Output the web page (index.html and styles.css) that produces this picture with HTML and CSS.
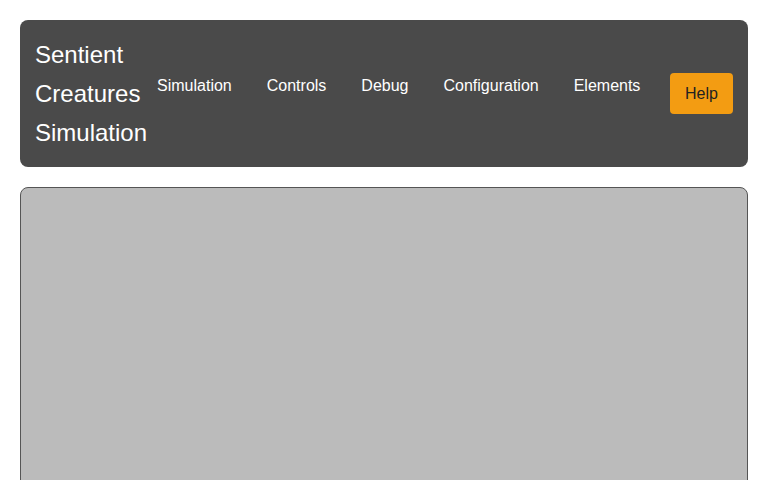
FILE: index.html
```html
<!DOCTYPE html>
<html>
<head>
<meta charset="utf-8">
<link rel="stylesheet" href="styles.css">
</head>
<body>
<header class="topbar">
  <h1 class="title">Sentient Creatures Simulation</h1>
  <nav class="nav">
    <a class="nav-link" href="#">Simulation</a>
    <a class="nav-link" href="#">Controls</a>
    <a class="nav-link" href="#">Debug</a>
    <a class="nav-link" href="#">Configuration</a>
    <a class="nav-link" href="#">Elements</a>
  </nav>
  <button class="help-btn">Help</button>
</header>
<main class="stage"></main>
</body>
</html>
```

FILE: styles.css
```css
html, body {
  margin: 0;
  padding: 0;
  background: #ffffff;
  font-family: "Liberation Sans", Arial, sans-serif;
}
body {
  padding: 20px;
}
.topbar {
  display: flex;
  align-items: center;
  background: #4a4a4a;
  border-radius: 8px;
  padding: 15px;
  color: #ffffff;
}
.title {
  margin: 0;
  width: min-content;
  font-size: 24px;
  font-weight: normal;
  line-height: 39px;
}
.nav {
  display: flex;
  gap: 35px;
  margin-left: 10px;
  padding-bottom: 16px;
}
.nav-link {
  color: #ffffff;
  text-decoration: none;
  font-size: 16px;
  line-height: 18px;
}
.help-btn {
  margin-left: auto;
  background: #f39c12;
  color: #222222;
  border: none;
  border-radius: 4px;
  font-family: "Liberation Sans", Arial, sans-serif;
  font-size: 16px;
  line-height: 19px;
  padding: 11px 15px;
  width: 63px;
}
.stage {
  display: block;
  margin-top: 20px;
  height: 400px;
  background: #bbbbbb;
  border: 1px solid #555555;
  border-radius: 8px;
}
```
